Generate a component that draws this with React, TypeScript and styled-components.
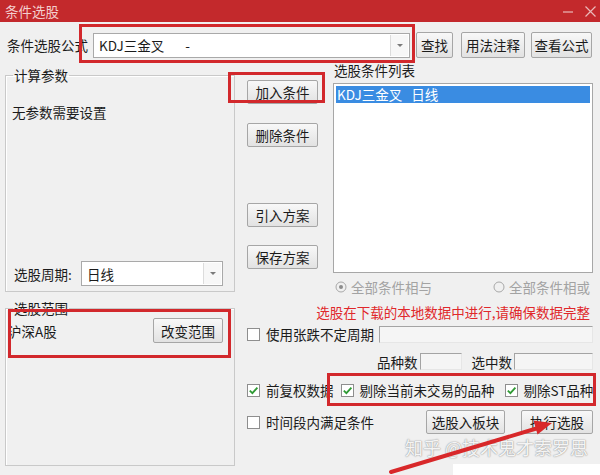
import styled, { createGlobalStyle } from 'styled-components';

const GlobalStyle = createGlobalStyle`
  html, body { margin: 0; padding: 0; background: #f0f0f0; }
  body { font-family: "Noto Sans CJK SC", "Liberation Sans", sans-serif; }
  * { box-sizing: border-box; }
`;

const Window = styled.div`
  position: relative;
  width: 600px;
  height: 475px;
  overflow: hidden;
  background: #f0f0f0;
  color: #1b1b1b;
  font-size: 13.5px;
  line-height: 16px;
  display: flex;
  flex-direction: column;
`;

const TitleBar = styled.div`
  flex: none;
  height: 22px;
  background: #c3292c;
  color: #f3cfcf;
  display: flex;
  align-items: center;
  justify-content: space-between;
  padding: 0 3px 0 5px;
`;

const Controls = styled.div`
  display: flex;
  align-items: center;
  gap: 10px;
`;

const Body = styled.div`
  flex: 1;
  display: flex;
  flex-direction: column;
  padding: 10px 7px 0 5px;
`;

const TopRow = styled.div`
  display: flex;
  align-items: center;
  height: 26px;
  padding-left: 2px;
`;

const Label = styled.span<{ $ml?: number; $color?: string }>`
  flex: none;
  white-space: nowrap;
  margin-left: ${(p) => p.$ml ?? 0}px;
  color: ${(p) => p.$color ?? 'inherit'};
`;

const Combo = styled.div<{ $w: number; $h: number; $ml?: number }>`
  flex: none;
  width: ${(p) => p.$w}px;
  height: ${(p) => p.$h}px;
  margin-left: ${(p) => p.$ml ?? 0}px;
  background: #fff;
  border: 1px solid #a9a9a9;
  display: flex;
  align-items: center;
`;

const ComboText = styled.span`
  flex: 1;
  padding-left: 5px;
  white-space: pre;
`;

const ComboArrow = styled.span`
  flex: none;
  width: 18px;
  align-self: stretch;
  margin: 1px;
  border-left: 1px solid #dcdcdc;
  background: #f7f7f7;
  display: flex;
  align-items: center;
  justify-content: center;
  &::after {
    content: '';
    border-left: 3px solid transparent;
    border-right: 3px solid transparent;
    border-top: 3px solid #7a7a7a;
  }
`;

const Button = styled.div<{ $w: number; $h?: number; $ml?: number; $mt?: number }>`
  flex: none;
  width: ${(p) => p.$w}px;
  height: ${(p) => p.$h ?? 24}px;
  margin-left: ${(p) => p.$ml ?? 0}px;
  margin-top: ${(p) => p.$mt ?? 0}px;
  border: 1px solid #a6a6a6;
  border-radius: 2px;
  background: linear-gradient(#f8f8f8, #e2e2e2);
  display: flex;
  align-items: center;
  justify-content: center;
  white-space: nowrap;
`;

const MainRow = styled.div`
  display: flex;
  align-items: flex-start;
  margin-top: 4px;
`;

const LeftColumn = styled.div`
  flex: none;
  width: 230px;
  margin-top: 6px;
  display: flex;
  flex-direction: column;
  gap: 9px;
`;

const Group = styled.fieldset<{ $pl: number }>`
  margin: 0;
  padding: 0 11px 5px ${(p) => p.$pl}px;
  border: 1px solid #c9c9c9;
  box-shadow: 1px 1px 0 #fff inset;
`;

const Legend = styled.legend<{ $ml: number }>`
  padding: 0 1px;
  margin-left: ${(p) => p.$ml}px;
  line-height: 14px;
`;

const GroupBody = styled.div<{ $h: number }>`
  height: ${(p) => p.$h}px;
  display: flex;
  flex-direction: column;
`;

const Note = styled.div`
  margin-top: 22px;
  margin-left: -1px;
`;

const FieldRow = styled.div<{ $mt?: string }>`
  display: flex;
  align-items: center;
  justify-content: space-between;
  margin-top: ${(p) => p.$mt ?? '0'};
`;

const RightArea = styled.div`
  flex: none;
  width: 346px;
  margin-left: 12px;
  display: flex;
  flex-direction: column;
`;

const Upper = styled.div`
  display: flex;
`;

const ButtonColumn = styled.div`
  width: 71px;
  display: flex;
  flex-direction: column;
`;

const ListColumn = styled.div`
  width: 260px;
  margin-left: 15px;
`;

const ListBox = styled.div`
  margin-top: 5px;
  height: 190px;
  background: #fff;
  border: 1px solid #a7a7a7;
  padding: 2px;
`;

const ListItem = styled.div<{ $selected?: boolean }>`
  height: 17px;
  padding-left: 1px;
  white-space: pre;
  background: ${(p) => (p.$selected ? '#3a8ce2' : 'transparent')};
  color: ${(p) => (p.$selected ? '#fff' : 'inherit')};
`;

const RadioRow = styled.div`
  display: flex;
  justify-content: space-between;
  margin-top: 6px;
  height: 16px;
  padding: 0 3px 0 88px;
  color: #a3a3a3;
`;

const Option = styled.div`
  display: flex;
  align-items: center;
  gap: 4px;
`;

const Warning = styled.div`
  margin-top: 9px;
  text-align: right;
  padding-right: 3px;
  color: #e0282b;
`;

const Row = styled.div<{ $mt: number; $h: number; $pl?: number }>`
  display: flex;
  align-items: center;
  margin-top: ${(p) => p.$mt}px;
  height: ${(p) => p.$h}px;
  padding-left: ${(p) => p.$pl ?? 0}px;
`;

const Field = styled.div<{ $w?: number; $ml: number; $h: number }>`
  flex: ${(p) => (p.$w ? 'none' : '1')};
  width: ${(p) => (p.$w ? `${p.$w}px` : 'auto')};
  height: ${(p) => p.$h}px;
  margin-left: ${(p) => p.$ml}px;
  background: #f5f5f5;
  border: 1px solid;
  border-color: #a4a4a4 #e6e6e6 #e6e6e6 #a4a4a4;
`;

const Box = styled.span<{ $ml?: number }>`
  flex: none;
  width: 13px;
  height: 13px;
  margin-left: ${(p) => p.$ml ?? 0}px;
  margin-right: 6px;
  background: #fff;
  border: 1px solid #8e8e8e;
  display: flex;
  align-items: center;
  justify-content: center;
`;

const Spacer = styled.div`
  flex: 1;
`;

const Highlight = styled.div<{ $x: number; $y: number; $w: number; $h: number }>`
  position: absolute;
  left: ${(p) => p.$x}px;
  top: ${(p) => p.$y}px;
  width: ${(p) => p.$w}px;
  height: ${(p) => p.$h}px;
  border: 3px solid #d2282c;
  pointer-events: none;
`;

const Overlay = styled.svg`
  position: absolute;
  left: 0;
  top: 0;
  pointer-events: none;
`;

const WatermarkStrip = styled.div`
  position: absolute;
  left: 453px;
  top: 464px;
  width: 147px;
  height: 11px;
  background: #fff;
`;

const Watermark = styled.div`
  position: absolute;
  left: 405px;
  top: 436px;
  font-size: 18px;
  line-height: 22px;
  color: rgba(255, 255, 255, 0.92);
  text-shadow: 0 0 1px #8a8a8a, 0 0 2px rgba(0, 0, 0, 0.25);
  white-space: nowrap;
`;

function Check({ checked }: { checked?: boolean }) {
  return checked ? (
    <svg width="11" height="11" viewBox="0 0 11 11">
      <path d="M1.8 5.6 L4.4 8.2 L9.4 2.6" fill="none" stroke="#2f9a34" strokeWidth="1.8" />
    </svg>
  ) : null;
}

function Radio({ on }: { on?: boolean }) {
  return (
    <svg width="12" height="12" viewBox="0 0 12 12">
      <circle cx="6" cy="6" r="5" fill="none" stroke="#a8a8a8" strokeWidth="1" />
      {on && <circle cx="6" cy="6" r="2" fill="#8c8c8c" />}
    </svg>
  );
}

function CheckItem({ label, checked, ml }: { label: string; checked?: boolean; ml?: number }) {
  return (
    <>
      <Box $ml={ml}>
        <Check checked={checked} />
      </Box>
      <Label>{label}</Label>
    </>
  );
}

export default function App() {
  return (
    <>
      <GlobalStyle />
      <Window>
        <TitleBar>
          <span>条件选股</span>
          <Controls>
            <svg width="12" height="12" viewBox="0 0 12 12">
              <path d="M1 7 H11" stroke="#eab9b9" strokeWidth="1.2" />
            </svg>
            <svg width="13" height="13" viewBox="0 0 13 13">
              <path d="M1.5 1.5 L11.5 11.5 M11.5 1.5 L1.5 11.5" stroke="#eab9b9" strokeWidth="1.2" />
            </svg>
          </Controls>
        </TitleBar>

        <Body>
          <TopRow>
            <Label>条件选股公式</Label>
            <Combo $w={317} $h={25} $ml={5}>
              <ComboText>{'KDJ三金叉       -'}</ComboText>
              <ComboArrow />
            </Combo>
            <Button $w={37} $h={26} $ml={6}>查找</Button>
            <Button $w={64} $h={26} $ml={8}>用法注释</Button>
            <Button $w={61} $h={26} $ml={6}>查看公式</Button>
          </TopRow>

          <MainRow>
            <LeftColumn>
              <Group $pl={7}>
                <Legend $ml={0}>计算参数</Legend>
                <GroupBody $h={204}>
                  <Note>无参数需要设置</Note>
                  <FieldRow $mt="auto">
                    <Label $ml={1}>选股周期:</Label>
                    <Combo $w={142} $h={25}>
                      <ComboText>日线</ComboText>
                      <ComboArrow />
                    </Combo>
                  </FieldRow>
                </GroupBody>
              </Group>
              <Group $pl={2}>
                <Legend $ml={5}>选股范围</Legend>
                <GroupBody $h={145}>
                  <FieldRow $mt="3px">
                    <Label>沪深A股</Label>
                    <Button $w={70} $h={25}>改变范围</Button>
                  </FieldRow>
                </GroupBody>
              </Group>
            </LeftColumn>

            <RightArea>
              <Upper>
                <ButtonColumn>
                  <Button $w={71} $mt={18}>加入条件</Button>
                  <Button $w={71} $mt={19}>删除条件</Button>
                  <Button $w={71} $mt={56}>引入方案</Button>
                  <Button $w={71} $mt={18}>保存方案</Button>
                </ButtonColumn>
                <ListColumn>
                  <Label $ml={1}>选股条件列表</Label>
                  <ListBox>
                    <ListItem $selected>{'KDJ三金叉   日线'}</ListItem>
                  </ListBox>
                </ListColumn>
              </Upper>

              <RadioRow>
                <Option>
                  <Radio on />
                  <span>全部条件相与</span>
                </Option>
                <Option>
                  <Radio />
                  <span>全部条件相或</span>
                </Option>
              </RadioRow>

              <Warning>选股在下载的本地数据中进行,请确保数据完整</Warning>

              <Row $mt={5} $h={18}>
                <CheckItem label="使用张跌不定周期" />
                <Field $ml={5} $h={17} />
              </Row>

              <Row $mt={10} $h={17} $pl={130}>
                <Label>品种数</Label>
                <Field $w={42} $ml={2} $h={17} />
                <Label $ml={10}>选中数</Label>
                <Field $ml={2} $h={17} />
              </Row>

              <Row $mt={11} $h={18}>
                <CheckItem label="前复权数据" checked />
                <CheckItem label="剔除当前未交易的品种" checked ml={7} />
                <CheckItem label="剔除ST品种" checked ml={10} />
              </Row>

              <Row $mt={11} $h={24}>
                <CheckItem label="时间段内满足条件" />
                <Spacer />
                <Button $w={79}>选股入板块</Button>
                <Button $w={72} $ml={16}>执行选股</Button>
              </Row>
            </RightArea>
          </MainRow>
        </Body>

        <Highlight $x={79} $y={24} $w={336} $h={39} />
        <Highlight $x={228} $y={72} $w={97} $h={31} />
        <Highlight $x={8} $y={309} $w={223} $h={49} />
        <Highlight $x={327} $y={373} $w={269} $h={33} />

        <WatermarkStrip />
        <Watermark>知乎 @技术鬼才索罗思</Watermark>

        <Overlay width="600" height="475" viewBox="0 0 600 475">
          <line x1="391" y1="472" x2="538" y2="428" stroke="#d8282a" strokeWidth="4" strokeLinecap="round" />
          <polygon points="552,423 537.5,434.5 533.5,420.5" fill="#d8282a" />
        </Overlay>
      </Window>
    </>
  );
}
